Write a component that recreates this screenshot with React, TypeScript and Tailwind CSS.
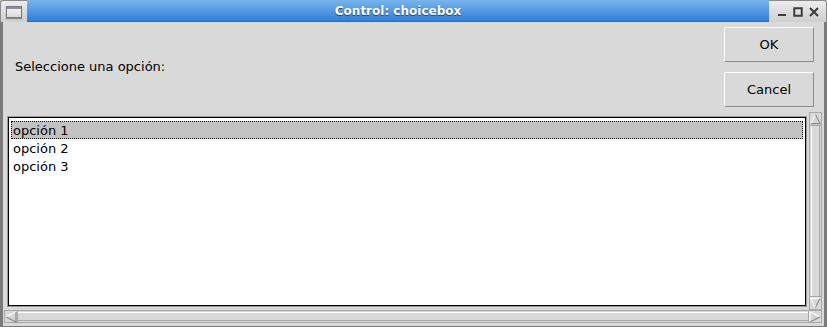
import React from 'react';

const font = { fontFamily: '"DejaVu Sans", Verdana, sans-serif' };

type Dir = 'up' | 'down' | 'left' | 'right';

// Tk-style raised triangle: light edges top/left, dark edges bottom/right
function Arrow({ dir }: { dir: Dir }) {
  const shapes: Record<Dir, { pts: string; light: string; dark: string }> = {
    up: { pts: '6,1 11,11 1,11', light: 'M1 11 L6 1', dark: 'M6 1 L11 11 L1 11' },
    down: { pts: '1,1 11,1 6,11', light: 'M6 11 L1 1 L11 1', dark: 'M11 1 L6 11' },
    left: { pts: '1,6 11,1 11,11', light: 'M1 6 L11 1', dark: 'M11 1 L11 11 L1 6' },
    right: { pts: '1,1 11,6 1,11', light: 'M1 11 L1 1 L11 6', dark: 'M11 6 L1 11' },
  };
  const s = shapes[dir];
  return (
    <svg width="12" height="12" viewBox="0 0 12 12" className="block">
      <polygon points={s.pts} fill="#d4d4d4" />
      <path d={s.light} fill="none" stroke="#ffffff" strokeWidth="1.2" />
      <path d={s.dark} fill="none" stroke="#8a8a8a" strokeWidth="1.2" />
    </svg>
  );
}

function TkButton({ label }: { label: string }) {
  return (
    <div className="w-[90px] h-[35px] flex items-center justify-center text-[13px] text-black bg-[#d9d9d9] border border-t-white border-l-white border-r-[#8c8c8c] border-b-[#8c8c8c]">
      {label}
    </div>
  );
}

export default function App() {
  const items = ['opción 1', 'opción 2', 'opción 3'];
  return (
    <div style={font} className="w-[827px] h-[327px] flex flex-col bg-[#d9d9d9] overflow-hidden">
      {/* title bar */}
      <div className="h-[22px] flex shrink-0">
        <div className="w-[27px] bg-gradient-to-b from-[#ececec] to-[#cfcfcf] border-l border-t border-[#8a8a8a] rounded-tl-[3px] flex items-center justify-center">
          <div className="w-[16px] h-[12px] border border-[#7a7a7a] bg-gradient-to-b from-[#f4f4f4] to-[#dcdcdc] shadow-[0_1px_1px_rgba(0,0,0,0.35)]">
            <div className="h-[2px] bg-[#8a8fa0]" />
          </div>
        </div>
        <div className="flex-1 bg-gradient-to-b from-[#78b4ee] to-[#2f7fd7] border-b border-[#2a6fc2] flex items-center justify-center">
          <span className="text-white font-bold text-[12px] [text-shadow:0_1px_1px_#1a3f70]">Control: choicebox</span>
        </div>
        <div className="w-[58px] bg-gradient-to-b from-[#ececec] to-[#cfcfcf] border-r border-t border-[#8a8a8a] rounded-tr-[3px] flex items-center pl-[8px] gap-[6px]">
          <svg width="10" height="10" viewBox="0 0 10 10"><rect x="1" y="7" width="8" height="2" fill="#3c3c3c" /></svg>
          <svg width="10" height="10" viewBox="0 0 10 10"><rect x="1.25" y="1.25" width="7.5" height="7.5" fill="none" stroke="#3c3c3c" strokeWidth="2" /></svg>
          <svg width="10" height="10" viewBox="0 0 10 10"><path d="M1 1 L9 9 M9 1 L1 9" stroke="#3c3c3c" strokeWidth="2" /></svg>
        </div>
      </div>

      {/* body */}
      <div className="flex-1 flex flex-col border-l-[3px] border-r-[3px] border-b border-[#7a7a7a]">
        <div className="h-[90px] flex items-center shrink-0">
          <div className="flex-1 pl-[12px] text-[13px] text-black">Seleccione una opción:</div>
          <div className="flex flex-col gap-[10px] mr-[10px]">
            <TkButton label="OK" />
            <TkButton label="Cancel" />
          </div>
        </div>

        <div className="flex h-[198px] pl-[1px] pr-[2px]">
          <div className="flex-1 pt-[5px] pb-[4px] pl-[4px] pr-[3px]">
            <div className="h-full bg-white border border-black outline outline-1 outline-[#9a9a9a] pt-[3px] px-[2px]">
              {items.map((it, i) => (
                <div
                  key={it}
                  className={
                    'h-[18px] leading-[17px] text-[13px] text-black pl-[1px] ' +
                    (i === 0 ? 'bg-[#c3c3c3] border border-dotted border-black' : 'border border-transparent')
                  }
                >
                  {it}
                </div>
              ))}
            </div>
          </div>
          <div className="w-[13px] flex flex-col border border-[#a8a8a8] bg-[#d9d9d9]">
            <div className="h-[13px] flex items-center justify-center border-b border-[#a8a8a8]"><Arrow dir="up" /></div>
            <div className="flex-1 mx-[1px] border-l border-white border-r border-r-[#a8a8a8]" />
            <div className="h-[13px] flex items-center justify-center border-t border-[#a8a8a8]"><Arrow dir="down" /></div>
          </div>
        </div>

        <div className="h-[13px] flex mx-[1px] mr-[2px] border border-[#a8a8a8]">
          <div className="w-[13px] flex items-center justify-center border-r border-[#a8a8a8]"><Arrow dir="left" /></div>
          <div className="flex-1 my-[1px] border-t border-white border-b border-b-[#a8a8a8]" />
          <div className="w-[13px] flex items-center justify-center border-l border-[#a8a8a8]"><Arrow dir="right" /></div>
        </div>
        <div className="flex-1" />
      </div>
    </div>
  );
}
